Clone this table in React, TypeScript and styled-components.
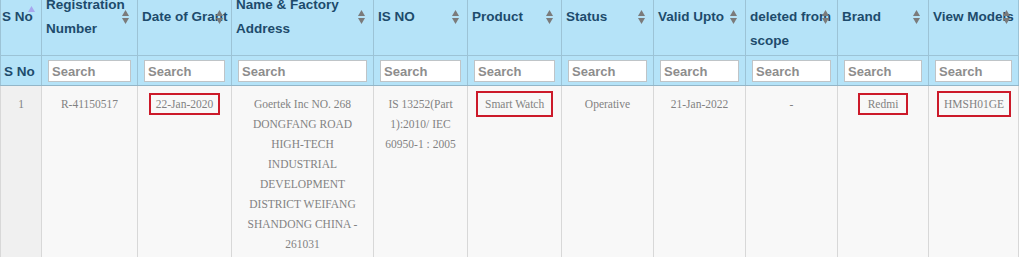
import * as React from 'react';
import styled, { createGlobalStyle } from 'styled-components';

const Global = createGlobalStyle`
  html, body {
    margin: 0;
    padding: 0;
    background: #ffffff;
    overflow: hidden;
  }
`;

const Viewport = styled.div`
  height: 257px;
  overflow: hidden;
  background: #ffffff;
`;

const Table = styled.table`
  margin-top: -21px;
  width: 1018px;
  table-layout: fixed;
  border-collapse: collapse;
  font-family: "Liberation Sans", Arial, sans-serif;
`;

const Col = styled.col<{ $w: number }>`
  width: ${p => p.$w}px;
`;

const HeadCell = styled.th<{ $first?: boolean }>`
  position: relative;
  background: #b5e3f8;
  color: #1d4b6c;
  font-size: 13.5px;
  font-weight: bold;
  line-height: 24px;
  text-align: left;
  vertical-align: middle;
  padding: 2px 0 2px ${p => (p.$first ? 1 : 4)}px;
  border: 1px solid #9cc3d6;
  border-top: none;
  white-space: nowrap;
`;

const FilterCell = styled.th`
  background: #b5e3f8;
  color: #1d4b6c;
  font-size: 13.5px;
  font-weight: bold;
  text-align: left;
  padding: 4px 6px 3px 6px;
  border: 1px solid #9cc3d6;
  border-bottom: 1px solid #93b6c8;
  height: 22px;
`;

const FilterLabel = styled.span`
  margin-left: -3px;
`;

const SearchInput = styled.input`
  box-sizing: border-box;
  display: block;
  width: 100%;
  height: 22px;
  margin: 0;
  padding: 1px 3px;
  border: 1px solid #bfc4c7;
  background: #ffffff;
  font-family: "Liberation Sans", Arial, sans-serif;
  font-size: 13px;
  font-weight: bold;
  color: #555;

  &::placeholder {
    color: #8d8d8d;
  }
`;

const SortMark = styled.svg<{ $asc?: boolean }>`
  position: absolute;
  right: ${p => (p.$asc ? 6 : 8)}px;
  top: 50%;
  transform: translateY(${p => (p.$asc ? -11 : -7)}px);
`;

const Cell = styled.td<{ $first?: boolean }>`
  background: ${p => (p.$first ? '#f0f0f0' : '#f8f8f8')};
  color: #828282;
  font-family: "Liberation Serif", "Times New Roman", serif;
  font-size: 11.5px;
  line-height: 20px;
  text-align: center;
  vertical-align: top;
  padding: 8px 8px 20px 8px;
  border-left: 1px solid #d8d8d8;
  border-right: 1px solid #d8d8d8;
`;

const Mark = styled.span<{ $v: number; $h: number }>`
  border: 2px solid #cc1a2a;
  padding: ${p => p.$v}px ${p => p.$h}px;
  white-space: nowrap;
`;

const SortIcon: React.FC<{ asc?: boolean }> = ({ asc }) =>
  asc ? (
    <SortMark $asc width="7" height="7" viewBox="0 0 7 7">
      <polygon points="0,6 3.5,0 7,6" fill="#a7a7ee" />
    </SortMark>
  ) : (
    <SortMark width="7" height="14" viewBox="0 0 7 14">
      <polygon points="0,6 3.5,0 7,6" fill="#7b7b7b" />
      <polygon points="0,8 7,8 3.5,14" fill="#7b7b7b" />
    </SortMark>
  );

const widths = [41, 96, 94, 142, 94, 94, 92, 92, 92, 91, 90];

const headers: { label: React.ReactNode; asc?: boolean }[] = [
  { label: 'S No', asc: true },
  { label: <>Registration<br />Number</> },
  { label: 'Date of Grant' },
  { label: <>Name &amp; Factory<br />Address</> },
  { label: 'IS NO' },
  { label: 'Product' },
  { label: 'Status' },
  { label: 'Valid Upto' },
  { label: <>Whether<br />deleted from<br />scope</> },
  { label: 'Brand' },
  { label: 'View Models' },
];

const App: React.FC = () => {
  return (
    <Viewport>
      <Global />
      <Table>
        <colgroup>
          {widths.map((w, i) => <Col key={i} $w={w} />)}
        </colgroup>
        <thead>
          <tr>
            {headers.map((h, i) => (
              <HeadCell key={i} $first={i === 0}>
                {h.label}
                <SortIcon asc={h.asc} />
              </HeadCell>
            ))}
          </tr>
          <tr>
            <FilterCell><FilterLabel>S No</FilterLabel></FilterCell>
            {headers.slice(1).map((_, i) => (
              <FilterCell key={i}>
                <SearchInput placeholder="Search" />
              </FilterCell>
            ))}
          </tr>
        </thead>
        <tbody>
          <tr>
            <Cell $first>1</Cell>
            <Cell>R-41150517</Cell>
            <Cell><Mark $v={3} $h={5}>22-Jan-2020</Mark></Cell>
            <Cell>
              Goertek Inc NO. 268<br />DONGFANG ROAD<br />HIGH-TECH<br />INDUSTRIAL<br />
              DEVELOPMENT<br />DISTRICT WEIFANG<br />SHANDONG CHINA -<br />261031
            </Cell>
            <Cell>IS 13252(Part<br />1):2010/ IEC<br />60950-1 : 2005</Cell>
            <Cell><Mark $v={5} $h={7}>Smart Watch</Mark></Cell>
            <Cell>Operative</Cell>
            <Cell>21-Jan-2022</Cell>
            <Cell>-</Cell>
            <Cell><Mark $v={3} $h={8}>Redmi</Mark></Cell>
            <Cell><Mark $v={5} $h={5}>HMSH01GE</Mark></Cell>
          </tr>
        </tbody>
      </Table>
    </Viewport>
  );
};

export default App;
